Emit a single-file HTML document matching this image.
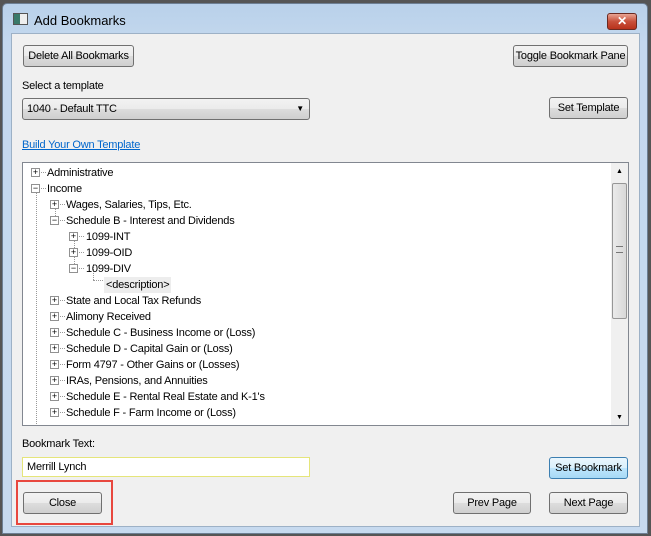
<!DOCTYPE html>
<html><head><style>
*{margin:0;padding:0;box-sizing:border-box}
body{width:651px;height:536px;background:#555;position:relative;overflow:hidden;font-family:"Liberation Sans",sans-serif;font-size:11px;letter-spacing:-0.2px;color:#000}
.frame{position:absolute;left:2px;top:3px;width:646px;height:531px;background:linear-gradient(#b9d1ea,#c4d8ee 40px,#c7daef);border:1px solid #6d7f93;border-radius:5px 5px 0 0}
.inner{position:absolute;left:11px;top:33px;width:629px;height:494px;background:#f0f0f0;border:1px solid #9db1c6}
.title{position:absolute;left:34px;top:13px;font-size:13px;letter-spacing:0;color:#000}
.ico{position:absolute;left:13px;top:13px;width:15px;height:12px;border:1px solid #555;background:linear-gradient(90deg,#3a7a6a 0 6px,#eee 6px)}
.x{position:absolute;left:607px;top:13px;width:30px;height:17px;border:1px solid #6b2a22;border-radius:3px;background:linear-gradient(#e8a493,#c9503b 50%,#b8321c);color:#fff;font-size:12px;font-weight:bold;text-align:center;line-height:15px}
.btn{position:absolute;height:22px;border:1px solid #707070;border-radius:3px;background:linear-gradient(#f2f2f2,#ebebeb 50%,#dddddd 50%,#cfcfcf);text-align:center;line-height:20px;white-space:nowrap}
.a{position:absolute;white-space:nowrap}
.tree{position:absolute;left:22px;top:162px;width:607px;height:264px;background:#fff;border:1px solid #828790;overflow:hidden}
.sb{position:absolute;right:0;top:0;width:17px;height:262px;background:#f0f0f0}
.thumb{position:absolute;left:1px;top:20px;width:15px;height:136px;border:1px solid #969696;border-radius:2px;background:linear-gradient(90deg,#eaeaea,#d8d8d8)}
.row{position:absolute;height:16px;line-height:16px;white-space:nowrap}
.bx{position:absolute;width:9px;height:9px;border:1px solid #919191;background:#fff;font-size:9px;letter-spacing:0;line-height:7px;text-align:center;color:#000}
.vl{position:absolute;width:0;border-left:1px dotted #999}
.hl{position:absolute;height:0;border-top:1px dotted #999;width:5px}
</style></head><body>
<div class="frame"></div>
<div class="ico"></div>
<div class="title">Add Bookmarks</div>
<div class="x">✕</div>
<div class="inner"></div>
<div class="btn" style="left:23px;top:45px;width:111px">Delete All Bookmarks</div>
<div class="btn" style="left:513px;top:45px;width:115px">Toggle Bookmark Pane</div>
<div class="a" style="left:22px;top:80px">Select a template</div>
<div class="btn" style="left:22px;top:98px;width:288px;text-align:left;padding-left:4px">1040 - Default TTC<span style="position:absolute;right:5px;top:0;font-size:8px">▼</span></div>
<div class="btn" style="left:549px;top:97px;width:79px">Set Template</div>
<div class="a" style="left:22px;top:139px;color:#0066cc;text-decoration:underline">Build Your Own Template</div>
<div class="tree">
<div class="vl" style="left:13px;top:21px;height:240px"></div>
<div class="vl" style="left:32px;top:37px;height:20px"></div>
<div class="vl" style="left:51px;top:69px;height:32px"></div>
<div class="vl" style="left:70px;top:101px;height:16px"></div>
<div class="hl" style="left:70px;top:117px;width:12px"></div>
<div class="sb"><div style="position:absolute;left:5px;top:5px;font-size:7px">▲</div><div class="thumb"><div style="position:absolute;left:3px;top:62px;width:7px;height:7px;border-top:1px solid #777;border-bottom:1px solid #777"></div></div><div style="position:absolute;left:5px;bottom:4px;font-size:7px">▼</div></div>
</div>
<div style="position:absolute;left:22px;top:162px">
<div class="bx" style="left:9px;top:6px">+</div><div class="hl" style="left:19px;top:10px"></div><div class="row" style="left:25px;top:3px">Administrative</div>
<div class="bx" style="left:9px;top:22px">−</div><div class="hl" style="left:19px;top:26px"></div><div class="row" style="left:25px;top:19px">Income</div>
<div class="bx" style="left:28px;top:38px">+</div><div class="hl" style="left:38px;top:42px"></div><div class="row" style="left:44px;top:35px">Wages, Salaries, Tips, Etc.</div>
<div class="bx" style="left:28px;top:54px">−</div><div class="hl" style="left:38px;top:58px"></div><div class="row" style="left:44px;top:51px">Schedule B - Interest and Dividends</div>
<div class="bx" style="left:47px;top:70px">+</div><div class="hl" style="left:57px;top:74px"></div><div class="row" style="left:64px;top:67px">1099-INT</div>
<div class="bx" style="left:47px;top:86px">+</div><div class="hl" style="left:57px;top:90px"></div><div class="row" style="left:64px;top:83px">1099-OID</div>
<div class="bx" style="left:47px;top:102px">−</div><div class="hl" style="left:57px;top:106px"></div><div class="row" style="left:64px;top:99px">1099-DIV</div>
<div class="row" style="left:82px;top:115px;background:#ededed;padding:0 2px">&lt;description&gt;</div>
<div class="bx" style="left:28px;top:134px">+</div><div class="hl" style="left:38px;top:138px"></div><div class="row" style="left:44px;top:131px">State and Local Tax Refunds</div>
<div class="bx" style="left:28px;top:150px">+</div><div class="hl" style="left:38px;top:154px"></div><div class="row" style="left:44px;top:147px">Alimony Received</div>
<div class="bx" style="left:28px;top:166px">+</div><div class="hl" style="left:38px;top:170px"></div><div class="row" style="left:44px;top:163px">Schedule C - Business Income or (Loss)</div>
<div class="bx" style="left:28px;top:182px">+</div><div class="hl" style="left:38px;top:186px"></div><div class="row" style="left:44px;top:179px">Schedule D - Capital Gain or (Loss)</div>
<div class="bx" style="left:28px;top:198px">+</div><div class="hl" style="left:38px;top:202px"></div><div class="row" style="left:44px;top:195px">Form 4797 - Other Gains or (Losses)</div>
<div class="bx" style="left:28px;top:214px">+</div><div class="hl" style="left:38px;top:218px"></div><div class="row" style="left:44px;top:211px">IRAs, Pensions, and Annuities</div>
<div class="bx" style="left:28px;top:230px">+</div><div class="hl" style="left:38px;top:234px"></div><div class="row" style="left:44px;top:227px">Schedule E - Rental Real Estate and K-1's</div>
<div class="bx" style="left:28px;top:246px">+</div><div class="hl" style="left:38px;top:250px"></div><div class="row" style="left:44px;top:243px">Schedule F - Farm Income or (Loss)</div>
</div>
<div class="a" style="left:22px;top:438px">Bookmark Text:</div>
<div style="position:absolute;left:22px;top:457px;width:288px;height:20px;border:1px solid #e5e57a;background:#fff;padding-left:4px;line-height:18px">Merrill Lynch</div>
<div class="btn" style="left:549px;top:457px;width:79px;border-color:#3c7fb1;background:linear-gradient(#eaf6fd,#d9f0fc 50%,#bee6fd 50%,#a7d9f5)">Set Bookmark</div>
<div class="btn" style="left:23px;top:492px;width:79px">Close</div>
<div class="btn" style="left:453px;top:492px;width:78px">Prev Page</div>
<div class="btn" style="left:549px;top:492px;width:79px">Next Page</div>
<div style="position:absolute;left:16px;top:480px;width:97px;height:45px;border:2px solid #e8473e"></div>
</body></html>
